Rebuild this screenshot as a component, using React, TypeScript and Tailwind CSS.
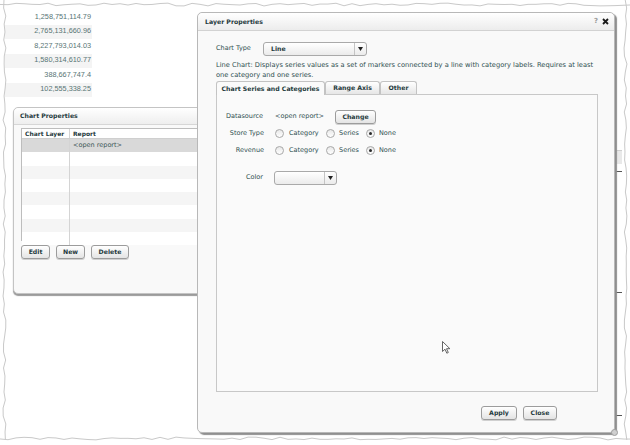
import React from 'react';

const numbers = [
  '1,258,751,114.79',
  '2,765,131,660.96',
  '8,227,793,014.03',
  '1,580,314,610.77',
  '388,667,747.4',
  '102,555,338.25',
];

// deterministic jagged points for the torn paper edge
const jag = (n: number, seed: number) => {
  const out: number[] = [];
  let s = seed;
  for (let i = 0; i < n; i++) {
    s = (s * 9301 + 49297) % 233280;
    out.push((s / 233280) * 3);
  }
  return out;
};

const TornEdge: React.FC = () => {
  const top = jag(80, 7).map((d, i) => `${i * 8},${3 + d}`).join(' ');
  const bottom = jag(80, 11).map((d, i) => `${i * 8},${437 + d}`).join(' ');
  const left = jag(56, 3).map((d, i) => `${3 + d},${i * 8}`).join(' ');
  const right = jag(56, 5).map((d, i) => `${624 + d},${i * 8}`).join(' ');
  return (
    <svg className="absolute inset-0 pointer-events-none" width="630" height="445">
      <polyline points={top} fill="none" stroke="#c9c9c9" strokeWidth="1" />
      <polyline points={bottom} fill="none" stroke="#c9c9c9" strokeWidth="1" />
      <polyline points={left} fill="none" stroke="#c9c9c9" strokeWidth="1" />
      <polyline points={right} fill="none" stroke="#c9c9c9" strokeWidth="1" />
    </svg>
  );
};

const Btn: React.FC<{ label: string; w: string }> = ({ label, w }) => (
  <div className={`${w} h-[14px] flex items-center justify-center rounded-[3px] border border-[#9c9c9c] bg-gradient-to-b from-white to-[#e4e4e4] text-[6.2px] font-bold text-[#1f3a3d] shadow-[0_1px_0_#d0d0d0]`}>
    {label}
  </div>
);

const Radio: React.FC<{ on?: boolean }> = ({ on }) => (
  <div className="w-[9px] h-[9px] rounded-full border border-[#a8a8a8] bg-gradient-to-b from-[#e8e8e8] to-white flex items-center justify-center">
    {on && <div className="w-[3px] h-[3px] rounded-full bg-[#2a2a2a]" />}
  </div>
);

const RadioRow: React.FC<{ label: string }> = ({ label }) => (
  <div className="flex items-center h-[9px]">
    <div className="w-[47px] text-right text-[6.5px] text-[#2f4f50]">{label}</div>
    <div className="ml-[11px] flex items-center gap-[5px]">
      <Radio />
      <span className="text-[6.5px] text-[#2f4f50] w-[37px]">Category</span>
    </div>
    <div className="flex items-center gap-[4px]">
      <Radio />
      <span className="text-[6.5px] text-[#2f4f50] w-[27px]">Series</span>
    </div>
    <div className="flex items-center gap-[4px]">
      <Radio on />
      <span className="text-[6.5px] text-[#2f4f50]">None</span>
    </div>
  </div>
);

const SelectBox: React.FC<{ w: string; value?: string }> = ({ w, value }) => (
  <div className={`${w} h-[14px] flex items-center rounded-[3px] border border-[#a9a9a9] bg-gradient-to-b from-white to-[#ebebeb]`}>
    <span className="flex-1 pl-[7px] text-[6.2px] font-bold text-[#1f3a3d]">{value}</span>
    <div className="w-[12px] h-full border-l border-[#c4c4c4] flex items-center justify-center">
      <svg width="5" height="4" viewBox="0 0 5 4"><path d="M0 0h5L2.5 4z" fill="#222" /></svg>
    </div>
  </div>
);

export default function App() {
  return (
    <div className="relative w-[630px] h-[445px] bg-white overflow-hidden" style={{ fontFamily: '"DejaVu Sans", Verdana, sans-serif' }}>
      {/* left page content */}
      <div className="flex flex-col pt-[10px] pl-[5px]">
        <div className="w-[87px] flex flex-col" style={{ fontFamily: '"Liberation Sans", Arial, sans-serif' }}>
          {numbers.map((n, i) => (
            <div key={n} className={`h-[14.5px] flex items-center justify-end pr-[1px] text-[7.3px] text-[#587575] ${i % 2 === 1 ? 'bg-[#f4f4f4]' : ''}`}>
              {n}
            </div>
          ))}
        </div>

        <div className="mt-[10px] ml-[8px] w-[210px] h-[187px] rounded-[5px] border border-[#c4c4c4] bg-[#f9f9f9] shadow-[0_2px_1px_#9a9a9a] flex flex-col">
          <div className="h-[17px] flex items-center px-[6px] rounded-t-[5px] bg-gradient-to-b from-white to-[#eeeeee] border-b border-[#d6d6d6] text-[6.2px] font-bold text-[#1f3a3d]">
            Chart Properties
          </div>
          <div className="ml-[7px] mt-[3px] h-[113px] border border-[#bdbdbd] bg-white flex flex-col">
            <div className="h-[13px] flex border-b border-[#cfcfcf] text-[6px] font-bold text-[#1f3a3d] whitespace-nowrap">
              <div className="w-[48px] flex items-center pl-[3px] border-r border-[#d4d4d4]">Chart Layer</div>
              <div className="flex-1 flex items-center pl-[3px]">Report</div>
            </div>
            <div className="flex-1 flex">
              <div className="w-[48px] border-r border-[#d4d4d4] flex flex-col">
                {[0, 1, 2, 3, 4, 5, 6, 7].map((i) => (
                  <div key={i} className={`h-[13.3px] ${i === 0 ? 'bg-[#d9d9d9]' : i % 2 === 0 ? 'bg-[#f5f5f5]' : 'bg-white'}`} />
                ))}
              </div>
              <div className="flex-1 flex flex-col">
                {[0, 1, 2, 3, 4, 5, 6, 7].map((i) => (
                  <div key={i} className={`h-[13.3px] flex items-center pl-[3px] text-[6.5px] text-[#3a5555] ${i === 0 ? 'bg-[#d9d9d9]' : i % 2 === 0 ? 'bg-[#f5f5f5]' : 'bg-white'}`}>
                    {i === 0 ? '<open report>' : ''}
                  </div>
                ))}
              </div>
            </div>
          </div>
          <div className="ml-[7px] mt-[4px] flex gap-[6px]">
            <Btn label="Edit" w="w-[29px]" />
            <Btn label="New" w="w-[29px]" />
            <Btn label="Delete" w="w-[38px]" />
          </div>
        </div>
      </div>

      {/* remnants of panels behind dialog, right side */}
      <div className="absolute left-[612px] top-[150px] w-[10px] h-[14px] bg-[#e9e9e9] border-t border-[#cfcfcf]" />
      <div className="absolute left-[612px] top-[171px] w-[10px] h-[1px] bg-[#555]" />
      <div className="absolute left-[612px] top-[185px] w-[4px] h-[28px] bg-[#cfcfcf]" />
      <div className="absolute left-[612px] top-[292px] w-[10px] h-[1px] bg-[#555]" />
      <div className="absolute left-[612px] top-[415px] w-[10px] h-[1px] bg-[#555]" />

      {/* Layer Properties dialog */}
      <div className="absolute left-[197px] top-[12px] w-[418px] h-[421px] rounded-[5px] border border-[#b8b8b8] bg-[#f9f9f9] shadow-[2px_2px_1px_#8f8f8f] flex flex-col">
        <div className="h-[18px] shrink-0 flex items-center justify-between pl-[7px] pr-[5px] rounded-t-[5px] bg-gradient-to-b from-white to-[#ececec] border-b border-[#d2d2d2]">
          <span className="text-[6.2px] font-bold text-[#1f3a3d]">Layer Properties</span>
          <div className="flex items-center gap-[4px]">
            <span className="text-[7px] font-bold text-[#9a9a9a]">?</span>
            <svg width="7" height="7" viewBox="0 0 7 7"><path d="M1 1l5 5M6 1L1 6" stroke="#1a1a1a" strokeWidth="1.8" /></svg>
          </div>
        </div>

        <div className="flex flex-col pl-[18px] pr-[17px]">
          <div className="mt-[11px] flex items-center">
            <span className="w-[47px] text-[6.5px] text-[#2f4f50]">Chart Type</span>
            <SelectBox w="w-[104px]" value="Line" />
          </div>
          <p className="mt-[4px] text-[6.7px] leading-[10px] text-[#2f4f50]">
            Line Chart: Displays series values as a set of markers connected by a line with category labels. Requires at least one category and one series.
          </p>

          <div className="mt-[1px] flex items-end h-[13px]">
            <div className="h-[14px] w-[109px] flex items-center justify-center bg-[#fafafa] border border-b-0 border-[#c3c3c3] rounded-t-[3px] text-[6.2px] font-bold text-[#1f3a3d] relative top-[1px]">
              Chart Series and Categories
            </div>
            <div className="h-[13px] w-[55px] flex items-center justify-center bg-gradient-to-b from-white to-[#e6e6e6] border border-b-0 border-[#c3c3c3] rounded-t-[3px] text-[6.2px] font-bold text-[#1f3a3d]">
              Range Axis
            </div>
            <div className="h-[13px] w-[37px] flex items-center justify-center bg-gradient-to-b from-white to-[#e6e6e6] border border-b-0 border-[#c3c3c3] rounded-t-[3px] text-[6.2px] font-bold text-[#1f3a3d]">
              Other
            </div>
          </div>

          <div className="h-[298px] w-[382px] border border-[#c8c8c8] bg-[#fafafa] flex flex-col pt-[15px]">
            <div className="flex items-center h-[14px]">
              <div className="w-[46px] text-right text-[6.5px] text-[#2f4f50]">Datasource</div>
              <div className="ml-[12px] w-[60px] text-[6.5px] text-[#2f4f50]">&lt;open report&gt;</div>
              <Btn label="Change" w="w-[41px]" />
            </div>
            <div className="mt-[5px]">
              <RadioRow label="Store Type" />
            </div>
            <div className="mt-[8px]">
              <RadioRow label="Revenue" />
            </div>
            <div className="mt-[16px] flex items-center">
              <div className="w-[46px] text-right text-[6.5px] text-[#2f4f50]">Color</div>
              <div className="ml-[11px]">
                <SelectBox w="w-[63px]" />
              </div>
            </div>
          </div>

          <div className="mt-[14px] flex justify-end gap-[6px] pr-[40px]">
            <Btn label="Apply" w="w-[36px]" />
            <Btn label="Close" w="w-[34px]" />
          </div>
        </div>
        <div className="absolute -right-[4px] -bottom-[4px] w-[7px] h-[7px] rounded-full bg-[#cfcfcf] border border-[#9e9e9e]" />
      </div>

      {/* mouse cursor */}
      <svg className="absolute left-[442px] top-[341px]" width="9" height="13" viewBox="0 0 9 13">
        <path d="M0.5 0.5v10l2.5-2.3 1.8 4 1.5-.7-1.8-3.8h3.4z" fill="#fff" stroke="#555" strokeWidth="0.9" />
      </svg>

      <TornEdge />
    </div>
  );
}
